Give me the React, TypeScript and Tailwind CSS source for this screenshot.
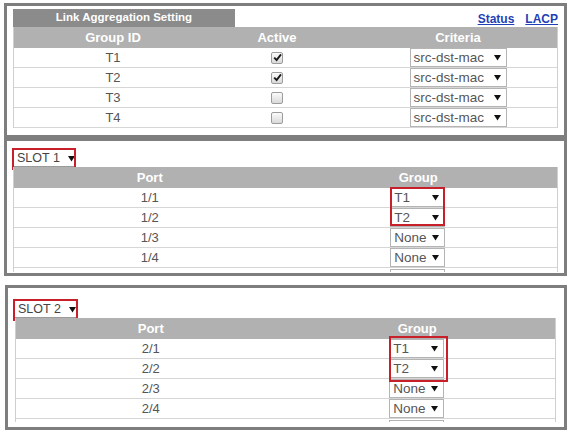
import React from 'react';

const Arrow = () => (
  <svg width="7" height="7" viewBox="0 0 7 7" className="shrink-0">
    <path d="M0 1 L7 1 L3.5 6.5 Z" fill="#111" />
  </svg>
);

function Check({ checked }: { checked: boolean }) {
  return (
    <span className="w-[12px] h-[12px] rounded-[2px] border border-[#9c9c9c] bg-linear-to-b from-[#fbfbfb] to-[#d9d9d9] flex items-center justify-center">
      {checked && (
        <svg width="9" height="9" viewBox="0 0 9 9">
          <path d="M1.2 4.6 L3.6 7 L8 1.4" stroke="#1a1a1a" strokeWidth="1.9" fill="none" />
        </svg>
      )}
    </span>
  );
}

function Select({ value, width }: { value: string; width: string }) {
  return (
    <div className={`${width} h-[19px] border border-[#b4b4b4] bg-white flex items-center justify-between pl-[3px] pr-[5px] text-[13.5px] text-[#555]`}>
      <span>{value}</span>
      <Arrow />
    </div>
  );
}

const groups = [
  { id: 'T1', active: true },
  { id: 'T2', active: true },
  { id: 'T3', active: false },
  { id: 'T4', active: false },
];

interface SlotProps {
  slot: number;
  ports: { port: string; group: string }[];
  panel: string;
  selectTop: string;
  tableH: string;
  selectW: string;
  selectMl: string;
  mark: string;
}

function SlotPanel({ slot, ports, panel, selectTop, tableH, selectW, selectMl, mark }: SlotProps) {
  return (
    <div className={`${panel} border-[3px] border-[#7e7e7e]`}>
      <div className={`${selectTop} ${selectMl} relative ${selectW}`}>
        <div className="h-[17px] border-b border-[#9a9a9a] flex items-center gap-[8px] pl-[3px] text-[12.5px] text-[#444] whitespace-nowrap">
          <span>SLOT {slot}</span>
          <Arrow />
        </div>
        <div className="absolute -left-[2px] -right-[2px] -top-[2px] -bottom-[3px] border-2 border-[#c8202b]" />
      </div>
      <div className={`${tableH} relative overflow-hidden border-x border-[#cfcfcf]`}>
        <div className="grid grid-cols-2 h-[21px] bg-[#b1b1b1] text-white font-bold text-[13px] items-center">
          <div className="text-center">Port</div>
          <div className="text-center pr-[6px]">Group</div>
        </div>
        {ports.map((p) => (
          <div key={p.port} className="grid grid-cols-2 h-[20px] border-b border-[#d6d6d6] items-center text-[13px] text-[#555]">
            <div className="text-center">{p.port}</div>
            <div className="flex justify-center pr-[7px]">
              <Select value={p.group} width="w-[55px]" />
            </div>
          </div>
        ))}
        {/* next row, scrolled out of view */}
        <div className="grid grid-cols-2 h-[20px]">
          <div />
          <div className="flex justify-center pr-[7px] pt-[1px]">
            <div className="w-[55px] h-[19px] border border-[#b4b4b4]" />
          </div>
        </div>
        <div className={`absolute ${mark} border-2 border-[#c8202b]`} />
      </div>
    </div>
  );
}

export default function App() {
  const slot = (n: number) =>
    ['T1', 'T2', 'None', 'None'].map((g, i) => ({ port: `${n}/${i + 1}`, group: g }));

  return (
    <div className="w-[575px] h-[435px] bg-white pt-[3px] font-['Liberation_Sans',Arial,sans-serif]">
      <div className="ml-[4px] w-[563px] h-[135px] border-[3px] border-[#7e7e7e] px-[6px] pt-[3px]">
        <div className="flex h-[18px] justify-between">
          <div className="w-[222px] h-[18px] bg-[#8b8b8b] text-white font-bold text-[11.5px] flex items-center justify-center">
            Link Aggregation Setting
          </div>
          <div className="flex gap-[11px] items-center pt-[2px] text-[12px] font-bold text-[#1f3fb5] underline">
            <span>Status</span>
            <span>LACP</span>
          </div>
        </div>
        <div className="border-x border-[#cfcfcf]">
          <div className="grid grid-cols-[198px_130px_1fr] h-[21px] bg-[#b1b1b1] text-white font-bold text-[13px] items-center">
            <div className="text-center">Group ID</div>
            <div className="text-center">Active</div>
            <div className="text-center pl-[17px]">Criteria</div>
          </div>
          {groups.map((g) => (
            <div key={g.id} className="grid grid-cols-[198px_130px_1fr] h-[20px] border-b border-[#d6d6d6] items-center text-[13px] text-[#555]">
              <div className="text-center">{g.id}</div>
              <div className="flex justify-center">
                <Check checked={g.active} />
              </div>
              <div className="flex justify-center pl-[17px]">
                <Select value="src-dst-mac" width="w-[97px]" />
              </div>
            </div>
          ))}
        </div>
      </div>

      <SlotPanel
        slot={1}
        ports={slot(1)}
        panel="ml-[4px] w-[563px] h-[138px] px-[6px]"
        selectTop="mt-[9px]"
        selectMl="ml-[1px]"
        selectW="w-[60px]"
        tableH="h-[105px]"
        mark="top-[20px] left-[376px] w-[55px] h-[39px]"
      />

      <SlotPanel
        slot={2}
        ports={slot(2)}
        panel="mt-[9px] ml-[5px] w-[562px] h-[145px] pl-[7px] pr-[8px]"
        selectTop="mt-[13px]"
        selectMl="ml-0"
        selectW="w-[61px]"
        tableH="h-[104px]"
        mark="top-[18px] left-[373px] w-[59px] h-[46px]"
      />
    </div>
  );
}
